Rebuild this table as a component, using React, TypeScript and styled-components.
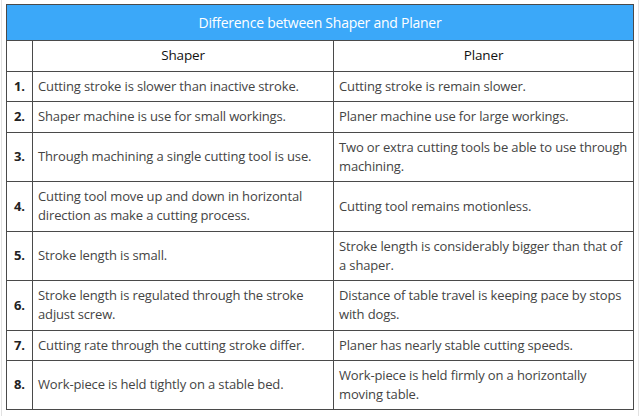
import styled, { createGlobalStyle } from "styled-components";

const rows: [string, string][] = [
    ["Cutting stroke is slower than inactive stroke.", "Cutting stroke is remain slower."],
    ["Shaper machine is use for small workings.", "Planer machine use for large workings."],
    ["Through machining a single cutting tool is use.", "Two or extra cutting tools be able to use through machining."],
    ["Cutting tool move up and down in horizontal direction as make a cutting process.", "Cutting tool remains motionless."],
    ["Stroke length is small.", "Stroke length is considerably bigger than that of a shaper."],
    ["Stroke length is regulated through the stroke adjust screw.", "Distance of table travel is keeping pace by stops with dogs."],
    ["Cutting rate through the cutting stroke differ.", "Planer has nearly stable cutting speeds."],
    ["Work-piece is held tightly on a stable bed.", "Work-piece is held firmly on a horizontally moving table."],
];

const App = () => {
    return (
        <>
            <GlobalStyle />
            <Wrapper>
                <Table>
                    <colgroup>
                        <col style={{ width: 26 }} />
                        <col style={{ width: 301 }} />
                        <col />
                    </colgroup>
                    <thead>
                        <tr>
                            <Caption colSpan={3}>Difference between Shaper and Planer</Caption>
                        </tr>
                        <tr>
                            <HeadCell />
                            <HeadCell>Shaper</HeadCell>
                            <HeadCell>Planer</HeadCell>
                        </tr>
                    </thead>
                    <tbody>
                        {rows.map(([shaper, planer], i) => (
                            <tr key={i}>
                                <NumCell>{i + 1}.</NumCell>
                                <Cell>{shaper}</Cell>
                                <Cell>{planer}</Cell>
                            </tr>
                        ))}
                    </tbody>
                </Table>
            </Wrapper>
        </>
    );
};
export default App;

const GlobalStyle = createGlobalStyle`
    body {
        margin: 0;
        background: #ffffff;
        font-family: "Open Sans", "Liberation Sans", sans-serif;
    }
`;

const Wrapper = styled.div`
    margin: 0 1px;
    padding: 4px 4px 0;
    height: 416px;
    box-sizing: border-box;
    border-left: 1px solid #e2e2e2;
    border-right: 1px solid #e2e2e2;
`;

const Table = styled.table`
    width: 628px;
    table-layout: fixed;
    border-collapse: collapse;
    font-size: 13px;
    letter-spacing: -0.14px;
    line-height: 19.25px;
    color: #444;
`;

const Caption = styled.th`
    height: 35px;
    padding: 0;
    background: #3ba8f9;
    color: #ffffff;
    font-size: 14px;
    font-weight: normal;
    letter-spacing: -0.25px;
    text-align: center;
    border: 1px solid #4a4a4a;
`;

const HeadCell = styled.th`
    height: 30px;
    padding: 0 5px;
    font-weight: 500;
    font-size: 13.5px;
    color: #111;
    text-align: center;
    border: 1px solid #4a4a4a;
`;

const Cell = styled.td`
    padding: 5px 5px;
    vertical-align: middle;
    border: 1px solid #4a4a4a;
`;

const NumCell = styled(Cell)`
    padding: 5px 0;
    text-align: center;
    font-weight: bold;
    color: #222;
`;
